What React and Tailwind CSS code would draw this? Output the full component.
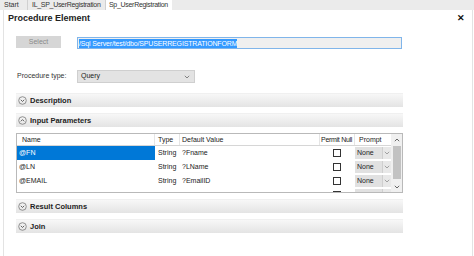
import React from "react";

const font = { fontFamily: '"Liberation Sans", Arial, sans-serif' };

const rows = [
    { name: "@FN", value: "?Fname", selected: true },
    { name: "@LN", value: "?LName" },
    { name: "@EMAIL", value: "?EmailID" },
    { name: "@PASS", value: "?Password" },
];

const CircleChevron = ({ up }) => (
    <svg width="9" height="9" viewBox="0 0 9 9" className="shrink-0">
        <circle cx="4.5" cy="4.5" r="3.8" fill="none" stroke="#7a7a7a" strokeWidth="0.8" />
        <path d={up ? "M2.8 5.3 L4.5 3.6 L6.2 5.3" : "M2.8 3.8 L4.5 5.5 L6.2 3.8"} fill="none" stroke="#555" strokeWidth="0.9" />
    </svg>
);

const Chevron = ({ up, color = "#777" }) => (
    <svg width="6" height="4" viewBox="0 0 6 4">
        <path d={up ? "M0.8 3.2 L3 1 L5.2 3.2" : "M0.8 0.8 L3 3 L5.2 0.8"} fill="none" stroke={color} strokeWidth="0.9" />
    </svg>
);

const Section = ({ title, up }) => (
    <div className="h-[14px] w-[387px] flex items-center gap-[3px] pl-[2px] bg-gradient-to-b from-[#f7f7f7] to-[#e4e4e4] border-t border-[#f0f0f0]">
        <CircleChevron up={up} />
        <span className="text-[7.5px] font-bold text-[#222]">{title}</span>
    </div>
);

export default function App() {
    return (
        <div className="w-[474px] h-[256px] bg-white overflow-hidden text-[#222]" style={font}>
            {/* tabs */}
            <div className="h-[10px] bg-[#ebebeb] flex items-stretch text-[7px] text-[#333] leading-[10px]">
                <div className="pl-[4px] w-[28px] border-r border-[#d0d0d0]">Start</div>
                <div className="pl-[4px] w-[78px] border-r border-[#d0d0d0] tracking-[-0.3px]">IL_SP_UserRegistration</div>
                <div className="pl-[3px] w-[66px] bg-white tracking-[-0.3px]">Sp_UserRegistration</div>
            </div>

            {/* panel */}
            <div className="ml-[3px] w-[470px] h-[246px] border-l border-r border-[#e3e3e3] flex flex-col">
                <div className="h-[18px] flex items-center justify-between pl-[4px] pr-[7px]">
                    <span className="text-[9px] font-bold text-[#222]">Procedure Element</span>
                    <span className="text-[9px] font-bold text-[#111]">✕</span>
                </div>

                <div className="mt-[8px] flex items-start pl-[12px]">
                    <div className="w-[45px] h-[12px] bg-[#d6d6d6] text-[7px] text-[#8a8a8a] flex items-center justify-center">Select</div>
                    <div className="ml-[16px] mt-[1px] w-[325px] h-[12px] border border-[#80b5ea] bg-[#efefef] flex items-center pl-[1px]">
                        <span className="bg-[#3399ff] text-white text-[7px] leading-[9px] tracking-[-0.15px]">/Sql Server/test/dbo/SPUSERREGISTRATIONFORM</span>
                    </div>
                </div>

                <div className="mt-[21px] flex items-center pl-[13px]">
                    <span className="w-[60px] text-[7px] text-[#333]">Procedure type:</span>
                    <div className="w-[118px] h-[13px] bg-[#e3e3e3] border border-[#cfcfcf] flex items-center justify-between pl-[3px] pr-[4px]">
                        <span className="text-[7px]">Query</span>
                        <Chevron />
                    </div>
                </div>

                <div className="mt-[10px] pl-[12px] flex flex-col gap-[6px]">
                    <Section title="Description" />
                    <Section title="Input Parameters" up />

                    {/* parameter grid */}
                    <div className="w-[387px] h-[60px] border border-[#b9b9b9] flex overflow-hidden text-[7px] text-[#222]">
                        <div className="w-[374px] flex flex-col">
                            <div className="h-[12px] shrink-0 grid grid-cols-[138px_25px_140px_35px_36px] border-b border-[#d6d6d6] leading-[11px] whitespace-nowrap">
                                <div className="pl-[5px] border-r border-[#e5e5e5]">Name</div>
                                <div className="pl-[3px] border-r border-[#e5e5e5]">Type</div>
                                <div className="pl-[2px] border-r border-[#e5e5e5]"> Default Value</div>
                                <div className="flex justify-end pr-[2px] border-r border-[#e5e5e5] tracking-[-0.3px]">Permit Null</div>
                                <div className="pl-[4px]">Prompt</div>
                            </div>
                            {rows.map((r) => (
                                <div key={r.name} className="h-[14px] shrink-0 grid grid-cols-[138px_25px_140px_35px_36px] items-center">
                                    <div className={`h-full flex items-center pl-[2px] ${r.selected ? "bg-[#0078d7] text-white" : ""}`}>{r.name}</div>
                                    <div className="pl-[3px]">String</div>
                                    <div className="pl-[2px]">{r.value}</div>
                                    <div className="flex justify-center pr-[2px]">
                                        <div className="w-[8px] h-[8px] border border-[#333] bg-white" />
                                    </div>
                                    <div className="h-full flex py-[1px]">
                                        <div className="w-[27px] bg-[#e1e1e1] pl-[2px] flex items-center">None</div>
                                        <div className="w-[9px] bg-[#e8e8e8] border-l border-[#cfcfcf] flex items-center justify-center">
                                            <Chevron color="#999" />
                                        </div>
                                    </div>
                                </div>
                            ))}
                        </div>
                        {/* scrollbar */}
                        <div className="w-[11px] bg-[#f0f0f0] flex flex-col items-center">
                            <div className="h-[12px] flex items-center"><Chevron up color="#555" /></div>
                            <div className="w-[8px] h-[33px] bg-[#c2c2c2]" />
                            <div className="flex-1" />
                            <div className="h-[10px] flex items-center"><Chevron color="#555" /></div>
                        </div>
                    </div>

                    <Section title="Result Columns" />
                    <Section title="Join" />
                </div>
            </div>
        </div>
    );
}
